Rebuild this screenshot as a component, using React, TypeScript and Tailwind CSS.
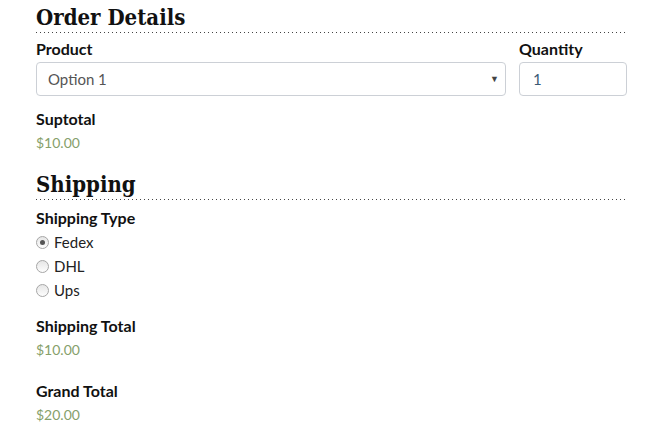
import { useState } from 'react'

const shippingOptions = ['Fedex', 'DHL', 'Ups']

function Radio({ checked }: { checked: boolean }) {
  return (
    <span className="flex h-[13px] w-[13px] shrink-0 items-center justify-center rounded-full border border-[#a6a6a6] bg-[linear-gradient(#e6e6e6,#fdfdfd)]">
      {checked && <span className="h-[5px] w-[5px] rounded-full bg-[#555]" />}
    </span>
  )
}

function SectionTitle({ children, className = '' }: { children: string; className?: string }) {
  return (
    <div className={className}>
      <h2 className="pb-[1px] font-['DejaVu_Serif_Condensed','DejaVu_Serif',serif] text-[22px] font-bold leading-[28px]">
        {children}
      </h2>
      <div className="h-[1px] bg-[linear-gradient(to_right,#444_1px,transparent_1px)] bg-[length:4px_1px]" />
    </div>
  )
}

export default function App() {
  const [shipping, setShipping] = useState('Fedex')

  return (
    <div className="min-h-[426px] bg-white pl-[36px] pr-[23px] pt-[3px] font-['Lato','Noto_Sans',sans-serif] text-[#111]">
      {/* Order details */}
      <SectionTitle>Order Details</SectionTitle>
      <div className="mt-[6px] flex gap-[13px]">
        <div className="flex flex-1 flex-col">
          <label className="text-[16px] font-bold leading-[20px]">Product</label>
          <div className="mt-[3px] flex h-[34px] items-center justify-between rounded-[4px] border border-[#ccd0d6] pl-[11px] pr-[6px] text-[15px] text-[#555]">
            <span>Option 1</span>
            <span className="text-[9px] text-[#444]">▼</span>
          </div>
        </div>
        <div className="flex w-[108px] flex-col">
          <label className="text-[16px] font-bold leading-[20px]">Quantity</label>
          <div className="mt-[3px] flex h-[34px] items-center rounded-[4px] border border-[#ccd0d6] pl-[13px] text-[15px] text-[#3b5a75]">
            1
          </div>
        </div>
      </div>

      <div className="mt-[13px] text-[16px] font-bold leading-[20px]">Suptotal</div>
      <div className="mt-[4px] text-[14px] leading-[20px] text-[#86a06a]">$10.00</div>

      {/* Shipping */}
      <SectionTitle className="mt-[17px]">Shipping</SectionTitle>
      <div className="mt-[8px] text-[16px] font-bold leading-[20px]">Shipping Type</div>
      <div className="mt-[2px] flex flex-col">
        {shippingOptions.map((opt) => (
          <label
            key={opt}
            onClick={() => setShipping(opt)}
            className="flex h-[24px] cursor-pointer items-center gap-[5px] text-[15px] text-[#222]"
          >
            <Radio checked={shipping === opt} />
            {opt}
          </label>
        ))}
      </div>

      <div className="mt-[14px] text-[16px] font-bold leading-[20px]">Shipping Total</div>
      <div className="mt-[4px] text-[14px] leading-[20px] text-[#86a06a]">$10.00</div>

      <div className="mt-[21px] text-[16px] font-bold leading-[20px]">Grand Total</div>
      <div className="mt-[4px] text-[14px] leading-[20px] text-[#86a06a]">$20.00</div>
    </div>
  )
}
